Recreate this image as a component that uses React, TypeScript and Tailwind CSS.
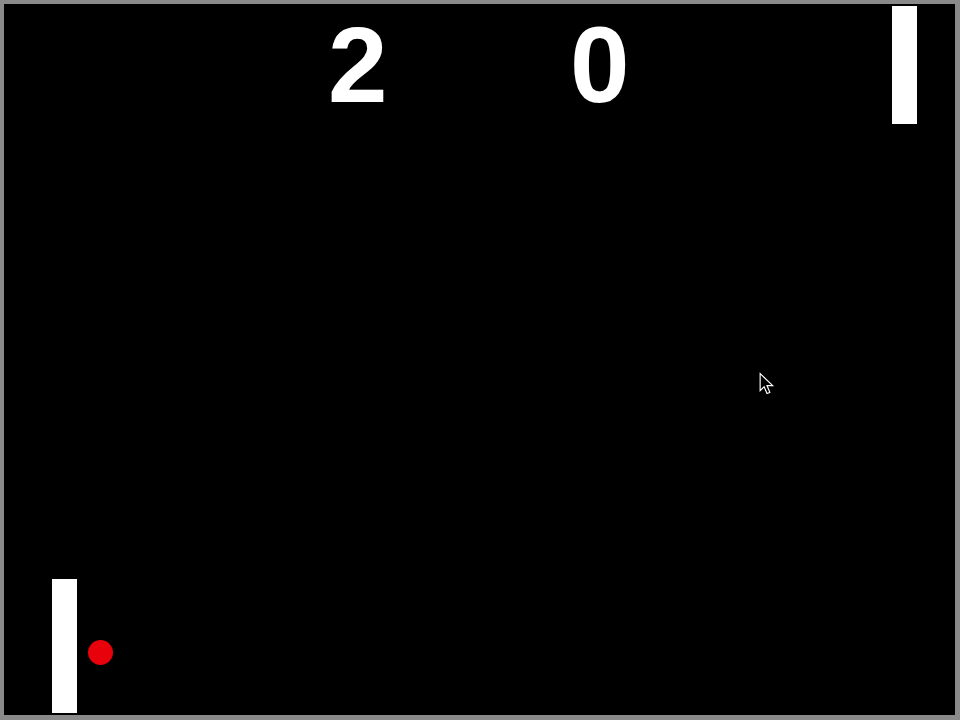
export default function App() {
  return (
    <div className="w-[960px] h-[720px] bg-[#8a8a8a] p-[4px] pr-[5px] pb-[5px]">
      <div className="relative w-full h-full bg-black">
        {/* Scores */}
        <div
          className="absolute top-0 left-[324px] text-white font-bold text-[107px] leading-[1.15]"
          style={{ fontFamily: '"Liberation Sans", Arial, sans-serif' }}
        >
          2
        </div>
        <div
          className="absolute top-0 left-[566px] text-white font-bold text-[107px] leading-[1.15]"
          style={{ fontFamily: '"Liberation Sans", Arial, sans-serif' }}
        >
          0
        </div>

        {/* Paddles */}
        <div className="absolute left-[888px] top-[2px] w-[25px] h-[118px] bg-white" />
        <div className="absolute left-[48px] top-[575px] w-[25px] h-[134px] bg-white" />

        {/* Ball */}
        <div className="absolute left-[84px] top-[636px] w-[25px] h-[25px] rounded-full bg-[#e8000b]" />

        {/* Mouse cursor */}
        <svg
          className="absolute left-[755px] top-[368px]"
          width="16"
          height="26"
          viewBox="0 0 14 22"
        >
          <path
            d="M1 1 L1 16 L4.5 12.5 L7 18.5 L9.5 17.5 L7 11.5 L12 11.5 Z"
            fill="black"
            stroke="white"
            strokeWidth="1"
            strokeLinejoin="miter"
          />
        </svg>
      </div>
    </div>
  );
}
